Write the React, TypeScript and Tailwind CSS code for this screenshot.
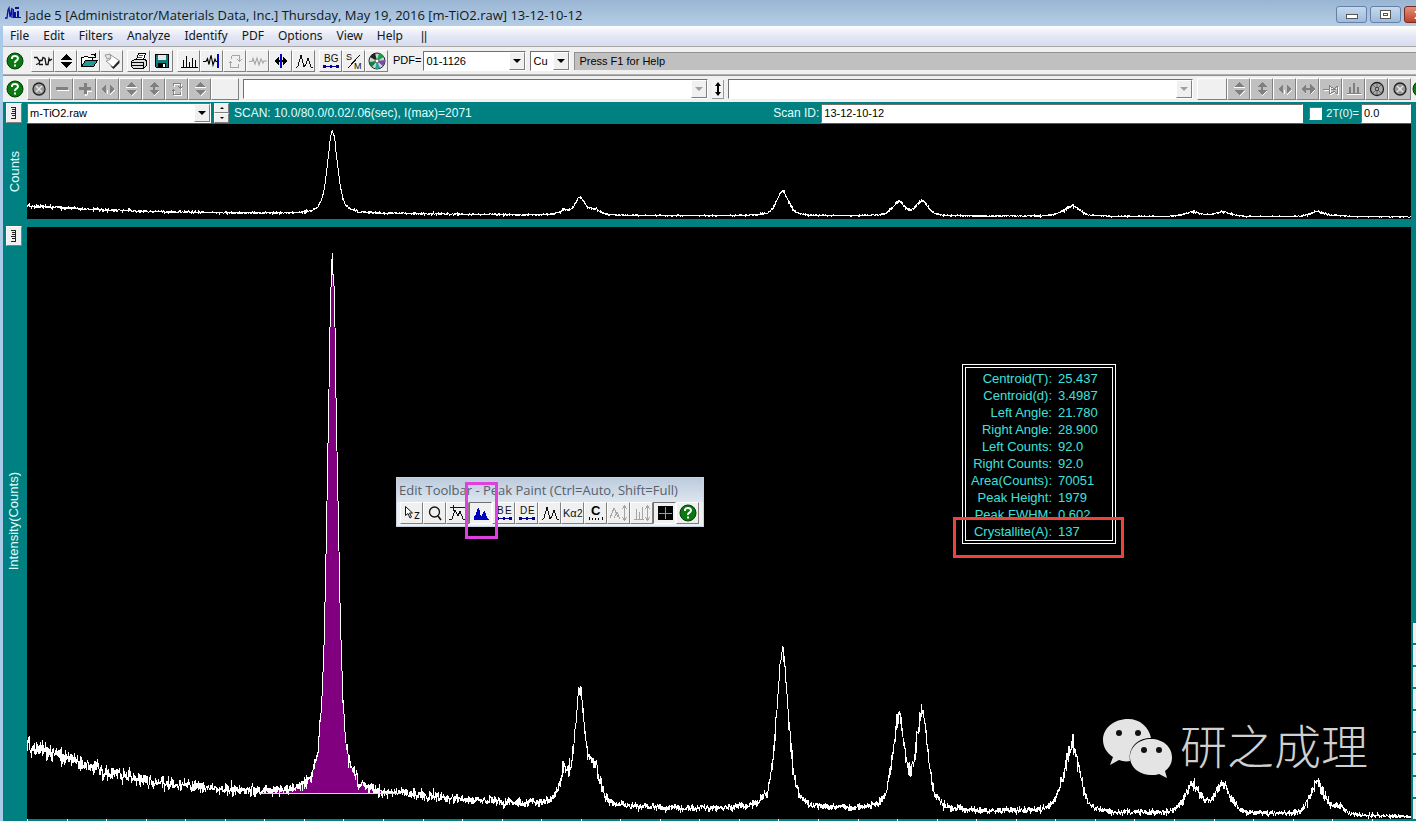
import type { ReactNode } from 'react';

/* ---------- diffraction pattern ---------- */

type Pt = [number, number];

const X0 = 27;
const X1 = 1411;

const BASELINE: Pt[] = [
  [27, 747], [60, 756], [100, 770], [150, 782], [200, 788], [260, 793], [330, 797],
  [400, 795], [450, 799], [520, 804], [640, 808], [700, 809], [840, 810], [990, 812],
  [1140, 814], [1290, 815], [1350, 816], [1411, 817],
];

const PEAKS: { x: number; h: number; w: number; eta: number }[] = [
  { x: 332.5, h: 534, w: 6, eta: 0.55 },
  { x: 564, h: 27, w: 6, eta: 0.4 },
  { x: 580, h: 114, w: 6, eta: 0.6 },
  { x: 595, h: 32, w: 6, eta: 0.4 },
  { x: 782.5, h: 158, w: 7, eta: 0.6 },
  { x: 899, h: 91, w: 7, eta: 0.6 },
  { x: 922, h: 95, w: 7, eta: 0.6 },
  { x: 1062, h: 12, w: 8, eta: 0.5 },
  { x: 1073, h: 65, w: 8, eta: 0.6 },
  { x: 1193, h: 28, w: 9, eta: 0.6 },
  { x: 1223, h: 29, w: 9, eta: 0.6 },
  { x: 1317, h: 33, w: 8, eta: 0.6 },
  { x: 1337, h: 7, w: 8, eta: 0.5 },
];

function baseAt(x: number): number {
  for (let i = 1; i < BASELINE.length; i++) {
    const [ax, ay] = BASELINE[i - 1];
    const [bx, by] = BASELINE[i];
    if (x <= bx) return ay + ((by - ay) * (x - ax)) / (bx - ax);
  }
  return 817;
}

function makeTrace(): Pt[] {
  let seed = 20160519;
  const rnd = () => {
    seed = (seed * 1664525 + 1013904223) % 4294967296;
    return seed / 4294967296;
  };
  const out: Pt[] = [];
  for (let x = X0; x <= X1; x += 0.4) {
    let y = baseAt(x);
    for (const p of PEAKS) {
      const t = (x - p.x) / p.w;
      y -= p.h * (p.eta / (1 + t * t) + (1 - p.eta) * Math.exp(-0.693 * t * t));
    }
    const sigma = Math.min(5, 0.58 * Math.sqrt(Math.max(2, 819 - y)));
    const n = (rnd() + rnd() + rnd() + rnd() - 2) * 1.7;
    out.push([x, y + n * sigma]);
  }
  return out;
}

const TRACE = makeTrace();
const toPath = (pts: Pt[]) =>
  'M' + pts.map(([x, y]) => `${x.toFixed(1)} ${y.toFixed(1)}`).join('L');
const MAIN_PATH = toPath(TRACE);
const OVERVIEW_PATH = toPath(TRACE.map(([x, y]): Pt => [x, 217 - (817 - y) * 0.155]));
const PAINTED = TRACE.filter(([x]) => x >= 259 && x <= 401).map(([x, y]): Pt => [x, Math.min(y, 793)]);
const PAINT_PATH = toPath([[259, 793], ...PAINTED, [401, 793]]) + 'Z';

/* ---------- small drawings ---------- */

function Glyph({ children }: { children: ReactNode }) {
  return (
    <svg viewBox="0 0 20 20" className="size-5 shrink-0" shapeRendering="crispEdges" fill="none" aria-hidden="true">
      {children}
    </svg>
  );
}

const HelpIcon = () => (
  <svg viewBox="0 0 20 20" className="size-5 shrink-0" aria-hidden="true">
    <circle cx="10" cy="10" r="8" fill="#087a10" stroke="#023c06" strokeWidth="1" />
    <path d="M7 8V6.500Q7.500 5 10 5t3 2.200q0 1.500-1.600 2.500T10 12" fill="none" stroke="#fff" strokeWidth="2" />
    <rect x="9" y="13.500" width="2" height="2" fill="#fff" />
  </svg>
);

const T = ({ x, y, s, children, fill = '#111' }: { x: number; y: number; s: number; children: ReactNode; fill?: string }) => (
  <text x={x} y={y} fontSize={s} fill={fill} fontFamily="Liberation Sans, Arial, sans-serif">{children}</text>
);

const BlueSpan = () => (
  <>
    <path d="M2 15.500H18" stroke="#0000a0" strokeWidth="1" />
    <path d="M2 14h3v3H2zM15 14h3v3h-3zM9 14h2v3H9z" fill="#0000a0" />
  </>
);

const ICONS: Record<string, ReactNode> = {
  wave: (
    <svg viewBox="0 0 20 20" className="size-5 shrink-0" fill="none" stroke="#111" strokeWidth="1.300" aria-hidden="true">
      <path d="M1 6.500h3l2 3h3l1-3 2 1 1 6h2l1-6 1 2 2-1.500M3 13.500l3-1 1-3M6 13.500h4" />
    </svg>
  ),
  updown: <Glyph><path d="M10 3l6 6H4zM10 17l6-6H4z" fill="#000" /></Glyph>,
  open: (
    <Glyph>
      <path d="M2.500 15V6.500h2l1-1h3l1 1h4V9" stroke="#000" fill="#fff" />
      <path d="M2.500 15.500l4-6h12l-4 6z" fill="#1c9c9c" stroke="#000" />
      <path d="M11.500 4.500q3-3 5 1M16.500 2v4h-3" stroke="#000" />
    </Glyph>
  ),
  eraser: (
    <svg viewBox="0 0 20 20" className="size-5 shrink-0" aria-hidden="true">
      <path d="M8 3.500l9 6-6 6.500-7-6 4-1.500z" fill="#fff" stroke="#999" />
      <path d="M3 4l5-1 1 4-4 1z" fill="#e4e4e4" stroke="#999" />
      <path d="M17.500 9v3l-6 6L8 14.500l3 1.500z" fill="#222" />
    </svg>
  ),
  print: (
    <Glyph>
      <path d="M7.500 8.500l2-6h7l-2 6z" fill="#fff" stroke="#000" />
      <path d="M2.500 10.500l3-2h11l1 2v4l-3 3h-10l-2-2z" fill="#ddd" stroke="#000" />
      <path d="M2 11.500h12M3 14.500h11M14.500 11v6" stroke="#000" />
      <path d="M10 4.500h4M9 6.500h4" stroke="#555" />
    </Glyph>
  ),
  save: (
    <Glyph>
      <path d="M3.500 3.500h13v13h-12l-1-1z" fill="#117c7c" stroke="#000" />
      <path d="M6 4h8v5H6z" fill="#e8e8e8" />
      <path d="M6 12h8v5H6z" fill="#000" />
      <path d="M11 13h2v3h-2z" fill="#fff" />
    </Glyph>
  ),
  sticks: <Glyph><path d="M2 16.500h17M4.500 16V9M7.500 16V5M10.500 16v-5M13.500 16V7M16.500 16V9" stroke="#000" /></Glyph>,
  wavebar: (
    <svg viewBox="0 0 20 20" className="size-5 shrink-0" fill="none" aria-hidden="true">
      <path d="M1 10.500h3l1.500-3 1.500 6 2-9.500 2 10 2-6 1 2.500h2" stroke="#000" strokeWidth="1.100" />
      <path d="M16 3v14" stroke="#0000d0" strokeWidth="2" />
    </svg>
  ),
  cycleOff: <Glyph><path d="M6.500 4.500h8v6M12.500 8.500l2 2 2-2M13.500 16.500h-8v-6M3.500 12.500l2-2 2 2M6.500 4.500v3M13.500 16v-3" stroke="#a5a5a5" /></Glyph>,
  waveOff: (
    <svg viewBox="0 0 20 20" className="size-5 shrink-0" fill="none" aria-hidden="true">
      <path d="M1 10.500h3l1-3 2 5.500 2-6 2 7 2-6 2 4 1-2h3" stroke="#a5a5a5" strokeWidth="1.100" />
    </svg>
  ),
  split: (
    <Glyph>
      <path d="M3 10l5-4v3h4V6l5 4-5 4v-3H8v3z" fill="#000" />
      <path d="M9 3h2v14H9z" fill="#0000d0" />
    </Glyph>
  ),
  peaks: <Glyph><path d="M2 17l2-2 3-11 3 12 2-3 2-6 3 9 2 1" stroke="#111" /></Glyph>,
  bg: <Glyph><T x={3} y={11} s={10}>BG</T><BlueSpan /></Glyph>,
  sm: <Glyph><T x={2} y={9} s={9}>S</T><T x={10} y={18} s={9}>M</T><path d="M4 17L16 4" stroke="#111" /></Glyph>,
  disc: (
    <svg viewBox="0 0 20 20" className="size-5 shrink-0" aria-hidden="true">
      <circle cx="10" cy="10" r="8" fill="#c8d8d0" stroke="#222" />
      <path d="M10 10L3 6a8 8 0 0 1 5-4z" fill="#222" />
      <path d="M10 10l2-8a8 8 0 0 1 5 4z" fill="#1fa050" />
      <path d="M10 10l8-1a8 8 0 0 1-2 6z" fill="#7a4ab0" />
      <path d="M10 10l3 7a8 8 0 0 1-5 1z" fill="#20a0a0" />
      <path d="M10 10l-5 6a8 8 0 0 1-3-5z" fill="#168040" />
      <circle cx="10" cy="10" r="2" fill="#fff" stroke="#555" />
    </svg>
  ),
  stop: (
    <svg viewBox="0 0 20 20" className="size-5 shrink-0" aria-hidden="true">
      <circle cx="10" cy="10" r="6" fill="#999" stroke="#222" strokeWidth="1.300" />
      <path d="M7 7l6 6M13 7l-6 6" stroke="#e4e4e4" strokeWidth="1.500" />
    </svg>
  ),
  discOff: (
    <svg viewBox="0 0 20 20" className="size-5 shrink-0" aria-hidden="true">
      <circle cx="10" cy="10" r="6.500" fill="#aaa" stroke="#222" strokeWidth="1.300" />
      <path d="M6 6l8 8M14 6l-8 8M10 4v12" stroke="#666" />
      <circle cx="10" cy="10" r="1.500" fill="#ddd" stroke="#333" />
    </svg>
  ),
  minus: <Glyph><path d="M5 11h12v1H5z" fill="#fff" /><path d="M4 8h12v3H4z" fill="#808080" /></Glyph>,
  plus: <Glyph><path d="M12 16h-2v-5M12 16v-4h5" stroke="#fff" /><path d="M4 8h12v3H4zM9 4h3v11H9z" fill="#808080" /></Glyph>,
  lrOff: <Glyph><path d="M9 15v-4M12 16l5-5" stroke="#fff" /><path d="M8 5v10l-4-5zM12 5v10l4-5z" fill="#808080" /></Glyph>,
  udOff: <Glyph><path d="M5 8h11v1H5zM10 17l5-5 1 0-5 5z" fill="#fff" /><path d="M10 3l5 5H5zM10 16l5-5H5z" fill="#808080" /></Glyph>,
  udLineOff: <Glyph><path d="M10 17l5-5" stroke="#fff" /><path d="M10 3l5 5h-4v3h4l-5 5-5-5h4V8H5z" fill="#808080" /></Glyph>,
  lrLineOff: <Glyph><path d="M13 15l4-4" stroke="#fff" /><path d="M3 10l5-5v4h4V5l5 5-5 5v-4H8v4z" fill="#808080" /></Glyph>,
  cycle: (
    <Glyph>
      <path d="M7.500 8V5.500h7v5M14.500 12v4.500h-7v-5" stroke="#fff" />
      <path d="M6.500 7V4.500h7v5M11.500 7.500l2 2 2-2M13.500 13v2.500h-7v-5M4.500 12.500l2-2 2 2" stroke="#808080" />
    </Glyph>
  ),
  pinOff: (
    <Glyph>
      <path d="M3 11.500h5M9.500 7v9M10 8.500l4 2 3-2v7l-3-2-4 2" stroke="#fff" />
      <path d="M2 10.500h6M8.500 6v9M9 7.500l4 2 3-2v7l-3-2-4 2M10 10.500h5" stroke="#808080" />
    </Glyph>
  ),
  barsOff: <Glyph><path d="M3 15h15v1H3z" fill="#fff" /><path d="M3 14h14v1H3zM5 8h2v6H5zM9 4h2v10H9zM13 8h2v6h-2z" fill="#808080" /></Glyph>,
  pointer: (
    <svg viewBox="0 0 20 20" className="size-5 shrink-0" aria-hidden="true">
      <path d="M3.500 3.500v9l2.500-2 2 4.500 1.500-1-2-4h3z" fill="#fff" stroke="#111" />
      <T x={12} y={16} s={12}>z</T>
    </svg>
  ),
  lens: (
    <svg viewBox="0 0 20 20" className="size-5 shrink-0" fill="none" stroke="#111" aria-hidden="true">
      <circle cx="9.500" cy="9" r="5" strokeWidth="1.300" /><path d="M13 13l3 4" strokeWidth="1.600" />
    </svg>
  ),
  bgfit: (
    <Glyph>
      <path d="M1 17l3-1 3-9 3 6 2-5 3 8 3 1" stroke="#111" />
      <path d="M2 4.500h16M5.500 2v6" stroke="#0000c0" />
    </Glyph>
  ),
  paint: <Glyph><path d="M3 17v-4l2-2 2-6h1l2 9 3-6h1l2 7 2 2z" fill="#0000c0" /></Glyph>,
  be: <Glyph><T x={3} y={11} s={10}>B</T><T x={11} y={11} s={10}>E</T><BlueSpan /></Glyph>,
  de: <Glyph><T x={3} y={11} s={10}>D</T><T x={11} y={11} s={10}>E</T><BlueSpan /></Glyph>,
  ka: <Glyph><T x={0} y={14} s={11}>Kα</T><T x={14} y={14} s={10}>2</T></Glyph>,
  c: (
    <Glyph>
      <text x="5" y="12" fontSize="13" fontWeight="bold" fill="#000" fontFamily="Liberation Sans, Arial, sans-serif">C</text>
      <path d="M3.500 17v-3M6.500 17v-2M9.500 17v-2M12.500 17v-2M16.500 17v-3" stroke="#000" />
    </Glyph>
  ),
  peaksArrow: <Glyph><path d="M1 15l4-10 4 9M5 15l3-6 3 7M15.500 4v12M13 6l2.500-3L18 6M13 14l2.500 3 2.500-3" stroke="#a5a5a5" /></Glyph>,
  sticksArrow: <Glyph><path d="M2 16.500h10M4.500 16V6M7.500 16V9M10.500 16V4M15.500 4v12M13 6l2.500-3L18 6M13 14l2.500 3 2.500-3" stroke="#a5a5a5" /></Glyph>,
  grid: <Glyph><path d="M3 3h15v14H3z" fill="#000" /><path d="M10 4h1v12h-1zM4 10h13v1H4z" fill="#20d8c0" /></Glyph>,
};

/* ---------- controls ---------- */

const RAISED = 'border border-t-white border-l-white border-r-[#808080] border-b-[#808080]';
const SUNKEN = 'border border-t-[#707070] border-l-[#707070] border-r-white border-b-white';

function ToolButton({ icon, label, off = false, pressed = false }: { icon: string; label: string; off?: boolean; pressed?: boolean }) {
  return (
    <button
      type="button"
      aria-label={label}
      className={`flex h-[22px] w-[23px] shrink-0 items-center justify-center overflow-hidden ${pressed ? SUNKEN : RAISED} ${off ? 'bg-[#c0c0c0]' : 'bg-[#f0f0f0]'}`}
    >
      {ICONS[icon]}
    </button>
  );
}

function HelpButton() {
  return (
    <button type="button" aria-label="Help" className="flex h-[22px] w-6 shrink-0 items-center justify-center">
      <HelpIcon />
    </button>
  );
}

function Combo({ label, value, className, off = false }: { label: string; value: string; className: string; off?: boolean }) {
  return (
    <div className={`relative flex h-5 bg-white ${SUNKEN} ${className}`}>
      <select
        aria-label={label}
        className="w-full appearance-none bg-white pl-[2px] text-[11px] leading-4 text-black outline-none"
        defaultValue={value}
      >
        <option>{value}</option>
      </select>
      <span className={`pointer-events-none absolute inset-y-0 right-0 flex w-4 items-center justify-center bg-[#f0f0f0] ${RAISED}`}>
        <svg viewBox="0 0 8 4" className="h-1 w-2" aria-hidden="true">
          <path d="M0 0h8L4 4z" fill={off ? '#a0a0a0' : '#000'} />
        </svg>
      </span>
    </div>
  );
}

function RailButton({ label }: { label: string }) {
  return (
    <button type="button" aria-label={label} className={`flex h-5 w-4 shrink-0 items-center justify-center bg-[#f0f0f0] ${RAISED}`}>
      <svg viewBox="0 0 6 12" className="h-3 w-[6px]" shapeRendering="crispEdges" fill="#222" aria-hidden="true">
        <path d="M4 0h1v12H4zM0 0h4v1H0zM1 2h3v1H1zM1 4h3v1H1zM0 6h4v1H0zM1 8h3v1H1zM0 11h4v1H0z" />
      </svg>
    </button>
  );
}

const MENUS = ['File', 'Edit', 'Filters', 'Analyze', 'Identify', 'PDF', 'Options', 'View', 'Help'];

const MAIN_TOOLS: [string, string][][] = [
  [['wave', 'Thumbnail'], ['updown', 'Scroll'], ['open', 'Open'], ['eraser', 'Erase']],
  [['print', 'Print'], ['save', 'Save']],
  [['sticks', 'Stick pattern'], ['wavebar', 'Trim'], ['cycleOff', 'Swap'], ['waveOff', 'Smooth'], ['split', 'Split'], ['peaks', 'Find peaks']],
  [['bg', 'Background'], ['sm', 'Search match'], ['disc', 'Database']],
];

const LEFT_TOOLS: [string, string][] = [
  ['stop', 'Stop'], ['minus', 'Remove'], ['plus', 'Add'], ['lrOff', 'Pan'], ['udOff', 'Scale'],
  ['udLineOff', 'Offset'], ['cycle', 'Cycle'], ['udOff', 'Range'],
];

const RIGHT_TOOLS: [string, string][] = [
  ['udOff', 'Scale overlay'], ['udLineOff', 'Offset overlay'], ['lrOff', 'Pan overlay'], ['lrLineOff', 'Shift overlay'],
  ['pinOff', 'Pin'], ['barsOff', 'Bars'], ['discOff', 'Disc'], ['stop', 'Close overlay'],
];

const EDIT_TOOLS: [string, string][] = [
  ['pointer', 'Zoom cursor'], ['lens', 'Magnify'], ['bgfit', 'Background edit'], ['paint', 'Peak paint'], ['be', 'Background erase'],
  ['de', 'Data erase'], ['peaks', 'Profile fit'], ['ka', 'K-alpha 2'], ['c', 'Calibrate'], ['peaksArrow', 'Scale peaks'],
  ['sticksArrow', 'Scale sticks'], ['grid', 'Grid'],
];

const RESULTS: [string, string][] = [
  ['Centroid(T):', '25.437'],
  ['Centroid(d):', '3.4987'],
  ['Left Angle:', '21.780'],
  ['Right Angle:', '28.900'],
  ['Left Counts:', '92.0'],
  ['Right Counts:', '92.0'],
  ['Area(Counts):', '70051'],
  ['Peak Height:', '1979'],
  ['Peak FWHM:', '0.602'],
  ['Crystallite(A):', '137'],
];

const TICKS = Array.from({ length: 35 }, (_, i) => X0 + Math.round(i * 39.55));

function TitleBar() {
  return (
    <header className="flex h-[26px] shrink-0 items-center bg-linear-to-b from-[#9ab5d3] to-[#b5cde6] pl-[5px] pt-[3px]">
      <svg viewBox="0 0 16 14" className="mb-1 h-[14px] w-4" fill="none" aria-hidden="true">
        <path d="M0 12h2l1-8 1-2 1 9 2-9v10" stroke="#1010a0" strokeWidth="1.300" />
        <path d="M8 12V3h1v3h2v6zM10 1h4v2h-4zM12 5h2v7h-2zM8 11h8v1H8z" fill="#1010a0" />
      </svg>
      <h1 className="ml-1 flex-1 whitespace-nowrap font-['Open_Sans',sans-serif] text-[13px] leading-5 text-[#101820]">
        Jade 5 [Administrator/Materials Data, Inc.] Thursday, May 19, 2016 [m-TiO2.raw] 13-12-10-12
      </h1>
      <div className="flex w-20 shrink-0 gap-[3px] overflow-hidden">
        <button type="button" aria-label="Minimize" className="flex h-[17px] w-[31px] shrink-0 items-center justify-center rounded-[3px] border border-[#6480a4] bg-linear-to-b from-[#c6d9ee] to-[#9dbbdc]">
          <span className="mt-1 h-[5px] w-3 border border-[#555] bg-white" />
        </button>
        <button type="button" aria-label="Maximize" className="flex h-[17px] w-[31px] shrink-0 items-center justify-center rounded-[3px] border border-[#6480a4] bg-linear-to-b from-[#c6d9ee] to-[#9dbbdc]">
          <span className="flex h-[9px] w-[11px] items-center justify-center border border-[#555] bg-white">
            <span className="h-[3px] w-[5px] border border-[#555]" />
          </span>
        </button>
        <button type="button" aria-label="Close" className="flex h-[17px] w-[31px] shrink-0 items-center rounded-[3px] border border-[#7a2a20] bg-linear-to-b from-[#e0907c] to-[#c04028] pl-[9px]">
          <svg viewBox="0 0 10 8" className="h-2 w-[10px]" aria-hidden="true"><path d="M1 0l8 8M9 0L1 8" stroke="#fff" strokeWidth="2" /></svg>
        </button>
      </div>
    </header>
  );
}

export default function App() {
  return (
    <div className="relative flex h-screen min-h-[600px] w-full flex-col overflow-hidden bg-[#f0f0f0] font-['Liberation_Sans',Arial,sans-serif]">
      <TitleBar />

      <div className="flex min-h-0 flex-1 flex-col border-l-[3px] border-[#a9cbe8]">
        <nav className="flex h-[21px] shrink-0 items-center gap-[14px] border-b border-[#a8a8a8] bg-linear-to-b from-white via-[#e4e8f5] to-[#d8dcf0] pl-[7px] font-['Noto_Sans',sans-serif] text-[12px] leading-4 text-[#101820]">
          {MENUS.map((m) => (
            <button key={m} type="button">{m}</button>
          ))}
          <span className="pl-1 font-['Liberation_Sans',Arial,sans-serif]">||</span>
        </nav>

        <div className="flex h-7 shrink-0 items-center gap-1 border-b border-[#b0b0b0]">
          <HelpButton />
          {MAIN_TOOLS.map((group, i) => (
            <div key={i} className="flex">
              {group.map(([icon, label]) => <ToolButton key={label} icon={icon} label={label} />)}
            </div>
          ))}
          <span className="ml-[1px] text-[11px]">PDF=</span>
          <Combo label="PDF number" value="01-1126" className="-ml-[2px] w-[103px] shrink-0" />
          <Combo label="Anode" value="Cu" className="w-10 shrink-0" />
          <output className="flex h-[18px] flex-1 items-center whitespace-nowrap border-l border-t border-[#909090] bg-[#c0c0c0] pl-1 text-[11px]">Press F1 for Help</output>
        </div>

        <div className="flex h-[27px] shrink-0 items-center overflow-hidden border-t border-[#909090]">
          <HelpButton />
          <div className="flex">
            {LEFT_TOOLS.map(([icon, label]) => <ToolButton key={label} icon={icon} label={label} off />)}
          </div>
          <button type="button" aria-label="Left overlay" className={`mr-1 h-[22px] w-7 shrink-0 bg-[#f0f0f0] ${RAISED}`} />
          <Combo label="Left phase" value="" className="min-w-0 flex-1" off />
          <svg viewBox="0 0 20 20" className="size-5 shrink-0" aria-hidden="true">
            <path d="M4 1h12v18H4z" fill="#f4f4f4" />
            <path d="M15.500 1v18M4 19.500h12" stroke="#999" />
            <path d="M10 3l3 4h-2v6h2l-3 4-3-4h2V7H7z" fill="#000" />
          </svg>
          <Combo label="Right phase" value="" className="min-w-0 flex-1" off />
          <button type="button" aria-label="Right overlay" className={`ml-1 h-[22px] w-[30px] shrink-0 bg-[#f0f0f0] ${RAISED}`} />
          <div className="flex">
            {RIGHT_TOOLS.map(([icon, label]) => <ToolButton key={label} icon={icon} label={label} off />)}
          </div>
          <span className="flex w-[5px] shrink-0 overflow-hidden"><HelpIcon /></span>
        </div>

        <main className="flex min-h-0 flex-1 flex-col bg-[#008080] text-[#e0ffff]">
          <div className="flex h-[22px] shrink-0 items-center pl-[3px] pr-[5px]">
            <RailButton label="Overview scale" />
            <Combo label="Scan file" value="m-TiO2.raw" className="ml-[5px] w-[184px] shrink-0" />
            <div className="ml-[3px] flex w-[15px] shrink-0 flex-col">
              <button type="button" aria-label="Next scan" className={`flex h-[10px] items-center justify-center bg-[#f0f0f0] ${RAISED}`}>
                <svg viewBox="0 0 4 2" className="h-[2px] w-1" aria-hidden="true"><path d="M2 0l2 2H0z" /></svg>
              </button>
              <button type="button" aria-label="Previous scan" className={`flex h-[10px] items-center justify-center bg-[#f0f0f0] ${RAISED}`}>
                <svg viewBox="0 0 4 2" className="h-[2px] w-1" aria-hidden="true"><path d="M0 0h4L2 2z" /></svg>
              </button>
            </div>
            <p className="ml-[5px] flex-1 whitespace-nowrap text-[12px]">SCAN: 10.0/80.0/0.02/.06(sec), I(max)=2071</p>
            <label htmlFor="scan-id" className="mr-[2px] whitespace-nowrap text-[12px]">Scan ID:</label>
            <input id="scan-id" defaultValue="13-12-10-12" className={`h-[19px] w-[482px] bg-white pl-[2px] text-[11px] text-black ${SUNKEN}`} />
            <input id="zero-on" type="checkbox" className={`ml-[6px] size-[13px] shrink-0 appearance-none bg-white ${SUNKEN}`} />
            <label htmlFor="zero-on" className="ml-[4px] mr-[2px] whitespace-nowrap text-[11px]">2T(0)=</label>
            <input aria-label="Zero offset" defaultValue="0.0" className={`h-[19px] w-[50px] bg-white pl-[2px] text-[11px] text-black ${SUNKEN}`} />
          </div>

          <section className="flex h-[95px] shrink-0 pr-[5px]" aria-label="Overview">
            <div className="flex w-6 shrink-0 items-center justify-center">
              <span className="rotate-180 text-[13px] leading-4 [writing-mode:vertical-rl]">Counts</span>
            </div>
            <svg viewBox="27 124 1384 95" preserveAspectRatio="none" className="h-full min-w-0 flex-1 bg-black" aria-hidden="true">
              <path d={OVERVIEW_PATH} fill="none" stroke="#fff" shapeRendering="crispEdges" />
            </svg>
          </section>

          <section className="mt-[7px] flex min-h-0 flex-1" aria-label="Pattern">
            <div className="flex w-6 shrink-0 flex-col items-center pr-[3px]">
              <RailButton label="Intensity scale" />
              <span className="flex flex-1 items-center pb-6">
                <span className="rotate-180 text-[13px] leading-4 [writing-mode:vertical-rl]">Intensity(Counts)</span>
              </span>
            </div>
            <svg viewBox="27 226 1384 595" preserveAspectRatio="none" className="h-full min-w-0 flex-1" aria-hidden="true">
              <path d="M27 227H1411V819H27z" fill="#000" />
              <path d={PAINT_PATH} fill="#800080" />
              <path d={MAIN_PATH} fill="none" stroke="#fff" shapeRendering="crispEdges" />
              <path d="M259 793.500H401" stroke="#f4c8f4" shapeRendering="crispEdges" />
              {TICKS.map((x) => <path key={x} d={`M${x} 819v2`} stroke="#fff" shapeRendering="crispEdges" />)}
            </svg>
            <div className="flex w-[5px] shrink-0 flex-col justify-end pl-[2px]">
              {Array.from({ length: 9 }, (_, i) => (
                <span key={i} className="mb-[2px] h-5 border-l border-t border-white bg-[#f0f0f0]" />
              ))}
            </div>
          </section>
        </main>
      </div>

      <div role="dialog" aria-label="Edit Toolbar" className="absolute left-[396px] top-[477px] border border-[#c8d4e0] bg-[#f0f0f0]">
        <h2 className="h-6 whitespace-nowrap bg-linear-to-b from-[#bccbdc] to-[#dde6f0] pl-[2px] font-['Open_Sans',sans-serif] text-[13px] leading-6 text-[#56606c]">
          Edit Toolbar - Peak Paint (Ctrl=Auto, Shift=Full)
        </h2>
        <div className="flex pb-[2px] pl-[3px] pr-1">
          {EDIT_TOOLS.map(([icon, label]) => (
            <ToolButton key={label} icon={icon} label={label} pressed={icon === 'paint' || icon === 'grid'} />
          ))}
          <button type="button" aria-label="Help" className={`flex h-[22px] w-[23px] items-center justify-center ${RAISED}`}><HelpIcon /></button>
        </div>
      </div>
      <div className="pointer-events-none absolute left-[465px] top-[482px] h-[57px] w-[33px] border-[3px] border-[#e040e0]" />

      <table className="absolute left-[962px] top-[364px] w-[154px] border-separate border-spacing-0 border-4 border-double border-white bg-black text-[13px] leading-[17px] text-[#3fe0dc]">
        <tbody>
          <tr><td className="h-[2px]" colSpan={2} /></tr>
          {RESULTS.map(([k, v]) => (
            <tr key={k}>
              <th scope="row" className="w-[86px] whitespace-nowrap p-0 text-right font-normal">{k}</th>
              <td className="p-0 pl-[6px]">{v}</td>
            </tr>
          ))}
        </tbody>
      </table>
      <div className="pointer-events-none absolute left-[953px] top-[517px] h-[41px] w-[171px] border-[3px] border-[#ec443c]" />

      <div className="absolute left-[1102px] top-[717px] flex items-start">
        <svg viewBox="0 0 72 62" className="h-[62px] w-[72px]" aria-hidden="true">
          <path d="M26 2C12 2 1 11 1 23c0 7 4 13 10 17l-3 8 9-5c3 1 7 2 11 1C26 30 36 21 49 21 47 10 38 2 26 2z" fill="#e4e4e4" />
          <path d="M49 22c-12 0-21 8-21 18s9 18 21 18c3 0 6 0 8-1l8 4-2-7c5-4 7-8 7-14 0-10-9-18-21-18z" fill="#e4e4e4" />
          <circle cx="17" cy="16" r="3" fill="#111" />
          <circle cx="36" cy="16" r="3" fill="#111" />
          <circle cx="42" cy="33" r="3" fill="#111" />
          <circle cx="57" cy="33" r="3" fill="#111" />
        </svg>
        <span className="ml-[6px] whitespace-nowrap font-['Noto_Sans_CJK_SC',sans-serif] text-[47px] font-light leading-[54px] text-[#d0d0d0]">研之成理</span>
      </div>
    </div>
  );
}
